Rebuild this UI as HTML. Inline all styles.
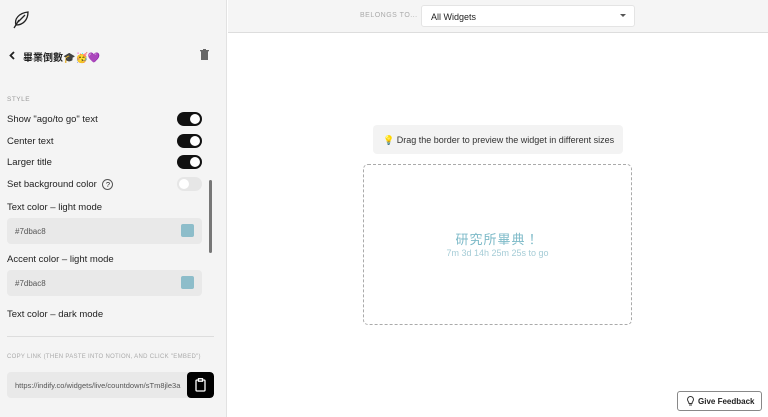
<!DOCTYPE html>
<html><head><meta charset="utf-8"><style>
*{box-sizing:border-box;margin:0;padding:0}
body{width:768px;height:417px;overflow:hidden;font-family:"Liberation Sans","Noto Sans CJK TC",sans-serif;background:#fff;position:relative;color:#222}
.side{position:absolute;left:0;top:0;width:227px;height:417px;background:#f4f4f4;border-right:1px solid #e2e2e2}
.a{position:absolute}
.row{position:absolute;left:7px;font-size:9.5px;color:#222}
.tg{position:absolute;left:177px;width:25px;height:14px;border-radius:7px;background:#111}
.tg::after{content:"";position:absolute;right:2px;top:2px;width:10px;height:10px;border-radius:50%;background:#fff}
.tg.off{background:#e6e6e6}.tg.off::after{left:2px;right:auto}
.inp{position:absolute;left:7px;width:195px;height:26px;background:#e9e9e9;border-radius:4px;font-size:8px;color:#555;padding:9px 8px}
.sw{position:absolute;right:8px;top:6px;width:13px;height:13px;border-radius:2px;background:#8dbdca}
</style></head><body>
<div class="side">
<svg class="a" style="left:11px;top:10px" width="20" height="20" viewBox="0 0 20 20" fill="none" stroke="#222" stroke-width="1.3"><path d="M3 18 L8 10"/><path d="M5 15 C3 9 8 3 17 2 C17 10 12 15 5 15Z"/><path d="M7 12 L14 5"/></svg>
<svg class="a" style="left:9px;top:51px" width="6" height="9" viewBox="0 0 6 9" fill="none" stroke="#222" stroke-width="1.8"><path d="M5 1 L1.5 4.5 L5 8"/></svg>
<div class="a" style="left:23px;top:49px;font-size:10px;font-weight:bold">畢業倒數🎓🥳💜</div>
<svg class="a" style="left:200px;top:49px" width="9" height="11" viewBox="0 0 9 11"><rect x="1" y="2" width="7" height="9" fill="#666"/><rect x="0" y="1" width="9" height="1.3" fill="#666"/><rect x="3" y="0" width="3" height="1" fill="#666"/></svg>
<div class="a" style="left:7px;top:96px;font-size:6.5px;color:#999;letter-spacing:.5px">STYLE</div>
<div class="row" style="top:114px">Show "ago/to go" text</div><div class="tg" style="top:112px"></div>
<div class="row" style="top:136px">Center text</div><div class="tg" style="top:134px"></div>
<div class="row" style="top:157px">Larger title</div><div class="tg" style="top:155px"></div>
<div class="row" style="top:179px">Set background color <span style="display:inline-block;width:11px;height:11px;border:1px solid #555;border-radius:50%;font-size:7.5px;text-align:center;line-height:9px;vertical-align:middle;margin-left:3px">?</span></div><div class="tg off" style="top:177px"></div>
<div class="a" style="left:209px;top:180px;width:3px;height:73px;background:#777;border-radius:2px"></div>
<div class="row" style="top:202px">Text color – light mode</div>
<div class="inp" style="top:218px">#7dbac8<div class="sw"></div></div>
<div class="row" style="top:254px">Accent color – light mode</div>
<div class="inp" style="top:270px">#7dbac8<div class="sw"></div></div>
<div class="row" style="top:309px">Text color – dark mode</div>
<div class="a" style="left:7px;top:336px;width:207px;height:1px;background:#ddd"></div>
<div class="a" style="left:7px;top:354px;font-size:6px;color:#aaa;letter-spacing:.3px">COPY LINK (THEN PASTE INTO NOTION, AND CLICK "EMBED")</div>
<div class="a" style="left:7px;top:372px;width:207px;height:26px;background:#e9e9e9;border-radius:4px;overflow:hidden;font-size:7.5px;color:#555;padding:9px 8px;white-space:nowrap">https://indify.co/widgets/live/countdown/sTm8jle3a
<div class="a" style="right:0;top:0;width:27px;height:26px;background:#000;border-radius:4px"><svg class="a" style="left:8px;top:6px" width="11" height="14" viewBox="0 0 11 14" fill="none" stroke="#fff" stroke-width="1.3"><rect x="1" y="2" width="9" height="11" rx="1"/><rect x="3.5" y="0.7" width="4" height="2.5" fill="#000"/></svg></div></div>
</div>
<div class="a" style="left:228px;top:0;width:540px;height:33px;background:#f5f5f5;border-bottom:1px solid #ddd"></div>
<div class="a" style="left:360px;top:12px;font-size:7px;color:#aaa;letter-spacing:.5px">BELONGS TO...</div>
<div class="a" style="left:421px;top:5px;width:214px;height:22px;background:#fff;border:1px solid #e4e4e4;border-radius:3px;font-size:9px;padding:6px 9px">All Widgets<span style="position:absolute;right:8px;top:8px;border:3px solid transparent;border-top:3px solid #555"></span></div>
<div class="a" style="left:373px;top:125px;width:250px;height:29px;background:#f3f3f3;border-radius:4px;font-size:9px;padding:10px 0 0 10px;color:#333"><span style="color:#f2d27a">💡</span> Drag the border to preview the widget in different sizes</div>
<div class="a" style="left:363px;top:164px;width:269px;height:161px;border:1px dashed #aaa;border-radius:5px"></div>
<div class="a" style="left:363px;top:229px;width:269px;text-align:center;font-size:13px;color:#7dbac8;letter-spacing:1px">研究所畢典！</div>
<div class="a" style="left:363px;top:248px;width:269px;text-align:center;font-size:9px;color:#a5ccd6">7m 3d 14h 25m 25s to go</div>
<div class="a" style="left:677px;top:391px;width:85px;height:20px;border:1px solid #888;border-radius:3px;background:#fff;font-size:8px;font-weight:bold;padding:5px 0 0 20px;color:#222"><svg class="a" style="left:9px;top:4px" width="7" height="10" viewBox="0 0 7 10" fill="none" stroke="#333" stroke-width="1"><path d="M2 9h3M2 7.5C2 6 0.5 5 0.5 3.5a3 3 0 0 1 6 0C6.5 5 5 6 5 7.5Z"/></svg>Give Feedback</div>
</body></html>
